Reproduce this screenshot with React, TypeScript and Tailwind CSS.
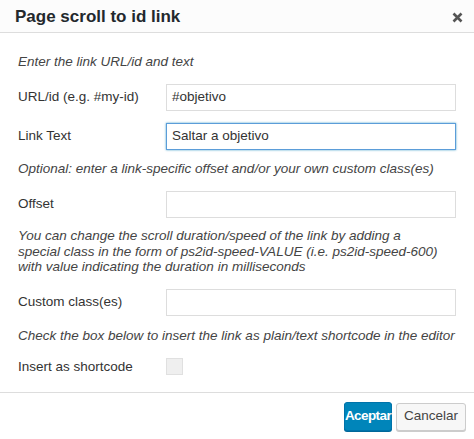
import React from "react";

const font = { fontFamily: '"Liberation Sans", Arial, Helvetica, sans-serif' };

function Row({ label, children, className = "" }: { label: string; children: React.ReactNode; className?: string }) {
  return (
    <div className={`flex items-center ${className}`}>
      <div className="w-[148px] shrink-0 text-[13.5px] text-[#333]">{label}</div>
      {children}
    </div>
  );
}

function Input({ value = "", focused = false }: { value?: string; focused?: boolean }) {
  return (
    <div
      className={`h-[27px] w-[291px] flex items-center px-[5px] text-[13.5px] text-[#333] bg-white border ${
        focused ? "border-[#5b9dd9] shadow-[0_0_2px_rgba(30,140,190,0.8)]" : "border-[#ddd]"
      }`}
    >
      {value}
    </div>
  );
}

export default function App() {
  return (
    <div className="w-[474px] h-[439px] bg-white flex flex-col" style={font}>
      <div className="h-[33px] shrink-0 bg-[#fcfcfc] border-b border-[#ddd] flex items-center justify-between pl-[15px] pr-[11px] pt-[2px]">
        <div className="text-[17px] font-bold text-[#23282d]">Page scroll to id link</div>
        <svg width="11" height="11" viewBox="0 0 11 11">
          <path d="M1.5 1.5 L9.5 9.5 M9.5 1.5 L1.5 9.5" stroke="#555" strokeWidth="2.6" strokeLinecap="butt" />
        </svg>
      </div>
      <div className="flex-1 px-[18px] pt-[20px]">
        <div className="text-[13.5px] italic text-[#444] leading-[17px]">Enter the link URL/id and text</div>
        <Row label="URL/id (e.g. #my-id)" className="mt-[14px]">
          <Input value="#objetivo" />
        </Row>
        <Row label="Link Text" className="mt-[12px]">
          <Input value="Saltar a objetivo" focused />
        </Row>
        <div className="mt-[10px] text-[13.5px] italic text-[#444] leading-[17px]">
          Optional: enter a link-specific offset and/or your own custom class(es)
        </div>
        <Row label="Offset" className="mt-[14px]">
          <Input />
        </Row>
        <div className="mt-[10px] w-[420px] text-[13.5px] italic text-[#444] leading-[15.5px]">
          You can change the scroll duration/speed of the link by adding a special class in the form of ps2id-speed-VALUE (i.e. ps2id-speed-600) with value indicating the duration in milliseconds
        </div>
        <Row label="Custom class(es)" className="mt-[14px]">
          <Input />
        </Row>
        <div className="mt-[11px] text-[13.5px] italic text-[#444] leading-[17px] whitespace-nowrap">
          Check the box below to insert the link as plain/text shortcode in the editor
        </div>
        <Row label="Insert as shortcode" className="mt-[13px]">
          <div className="w-[17px] h-[17px] bg-[#efefef] border border-[#e0e0e0]" />
        </Row>
      </div>
      <div className="h-[47px] shrink-0 border-t border-[#ddd] flex items-center justify-end gap-[4px] pr-[8px] pt-[1px]">
        <div className="h-[29px] w-[48px] rounded-[3px] bg-[#0085ba] border border-[#0073aa] text-white text-[13.5px] font-bold flex items-center justify-center tracking-[-0.6px] shadow-[0_1px_0_#006799]">
          Aceptar
        </div>
        <div className="h-[28px] w-[70px] rounded-[3px] bg-[#f7f7f7] border border-[#ccc] text-[#444] text-[13.5px] flex items-center justify-center shadow-[0_1px_0_#ccc]">
          Cancelar
        </div>
      </div>
    </div>
  );
}
